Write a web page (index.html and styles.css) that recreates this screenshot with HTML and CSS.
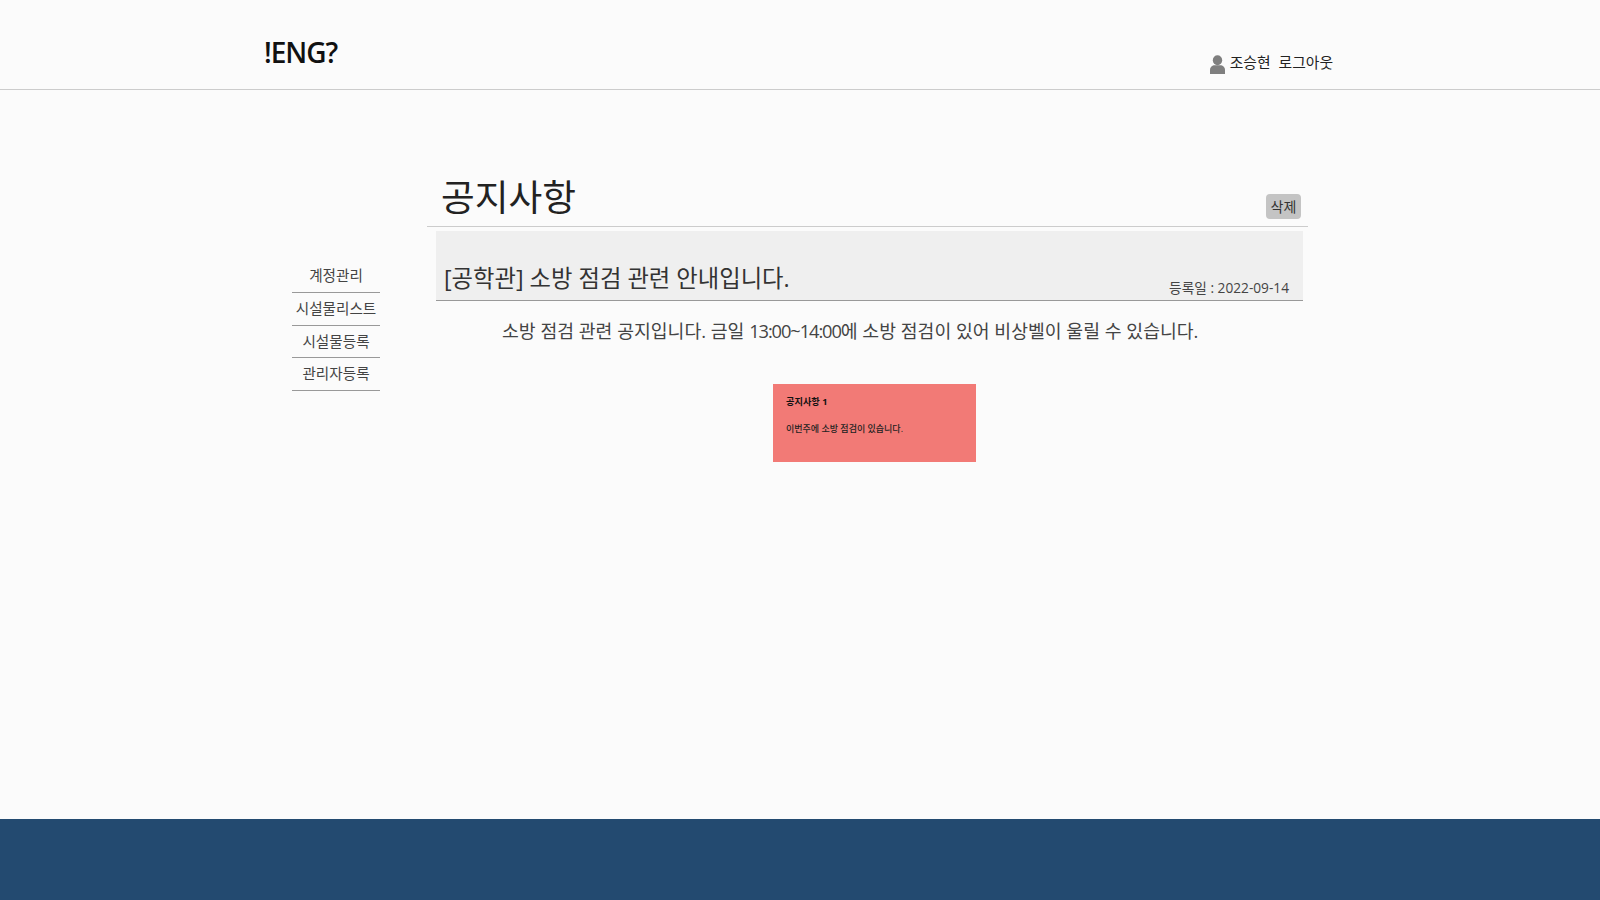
FILE: index.html
```html
<!DOCTYPE html>
<html lang="ko">
<head>
<meta charset="utf-8">
<title>공지사항</title>
<link rel="stylesheet" href="styles.css">
</head>
<body>
<header class="header">
  <div class="logo">!ENG?</div>
  <div class="user">
    <svg class="user-icon" viewBox="0 0 16 20"><ellipse cx="8" cy="5.500" rx="5" ry="5.300"/><path d="M0 20v-4.200C0 12.800 2.500 10.800 5 10.800h6c2.500 0 5 2 5 5V20z"/></svg>
    <span class="user-name">조승현</span>
    <span>로그아웃</span>
  </div>
</header>
<div class="content">
  <nav class="side">
    <a class="side-item">계정관리</a>
    <a class="side-item">시설물리스트</a>
    <a class="side-item">시설물등록</a>
    <a class="side-item">관리자등록</a>
  </nav>
  <main class="main">
    <div class="title-row">
      <h1 class="page-title">공지사항</h1>
      <button class="del">삭제</button>
    </div>
    <div class="notice-head">
      <h2 class="notice-title">[공학관] 소방 점검 관련 안내입니다.</h2>
      <span class="notice-date">등록일 : 2022-09-14</span>
    </div>
    <p class="notice-body">소방 점검 관련 공지입니다. 금일 <span class="time">13:00~14:00</span>에 소방 점검이 있어 비상벨이 울릴 수 있습니다.</p>
    <div class="card">
      <div class="card-title">공지사항 1</div>
      <div class="card-text">이번주에 소방 점검이 있습니다.</div>
    </div>
  </main>
</div>
<footer class="footer"></footer>
</body>
</html>
```
FILE: styles.css
```css
* { box-sizing: border-box; }
html, body { margin: 0; height: 100%; }
body {
  display: flex;
  flex-direction: column;
  height: 900px;
  overflow: hidden;
  background: #fbfbfb;
  color: #222;
  font-family: "Open Sans", "Noto Sans CJK KR", sans-serif;
}
.header {
  flex: none;
  height: 90px;
  border-bottom: 1px solid #ccc;
  padding-left: 264px;
  padding-right: 267px;
  display: flex;
  justify-content: space-between;
}
.logo {
  margin-top: 33px;
  font-size: 28px;
  line-height: 38px;
  font-weight: 600;
  color: #111;
  letter-spacing: -1px;
}
.user {
  margin-top: 50px;
  height: 24px;
  display: flex;
  align-items: center;
  font-size: 14.800px;
  line-height: 24px;
  color: #222;
}
.user-icon { width: 15px; height: 19px; fill: #7f7f7f; margin-right: 5px; margin-top: 4px; }
.user-name { margin-right: 8px; }
.content {
  flex: 1;
  display: flex;
  padding-left: 292px;
}
.side {
  width: 88px;
  margin-top: 170.300px;
  flex: none;
}
.side-item {
  display: block;
  height: 32.670px;
  line-height: 31.500px;
  border-bottom: 1px solid #999;
  text-align: center;
  font-size: 14.600px;
  color: #444;
  white-space: nowrap;
}
.main {
  width: 881px;
  margin-left: 47px;
  padding-top: 68px;
}
.title-row {
  height: 69px;
  border-bottom: 1px solid #ccc;
  padding-left: 14px;
  padding-right: 7px;
  display: flex;
  justify-content: space-between;
  align-items: flex-end;
}
.page-title {
  margin: 0 0 -1px;
  font-size: 36.700px;
  line-height: 60px;
  font-weight: 400;
  color: #222;
}
.del {
  margin-bottom: 7px;
  width: 35px;
  height: 25px;
  padding: 0;
  border: 0;
  border-radius: 4px;
  background: #c4c4c4;
  color: #333;
  font-family: inherit;
  font-size: 14px;
  line-height: 25px;
}
.notice-head {
  margin: 4px 5px 0 9px;
  height: 70px;
  background: #efefef;
  border-bottom: 1px solid #999;
  padding: 0 14px 0 8px;
  display: flex;
  justify-content: space-between;
  align-items: flex-end;
}
.notice-title {
  margin: 0 0 3px;
  font-size: 23.300px;
  line-height: 38px;
  font-weight: 400;
  color: #333;
}
.notice-date {
  font-size: 13.700px;
  line-height: 24px;
  color: #444;
}
.notice-body {
  margin: 14px 0 0 75px;
  font-size: 18.300px;
  line-height: 32px;
  color: #444;
  white-space: nowrap;
}
.time { letter-spacing: -1.100px; }
.card {
  margin: 37px 0 0 346px;
  width: 203px;
  height: 78px;
  padding: 10px 13px;
  background: #f27a76;
  color: #222;
}
.card-title {
  font-size: 9.200px;
  line-height: 16px;
  font-weight: 700;
  color: #111;
}
.card-text {
  margin-top: 11px;
  font-size: 9px;
  line-height: 16px;
  font-weight: 500;
}
.footer {
  flex: none;
  height: 81px;
  background: #234a70;
}
```
